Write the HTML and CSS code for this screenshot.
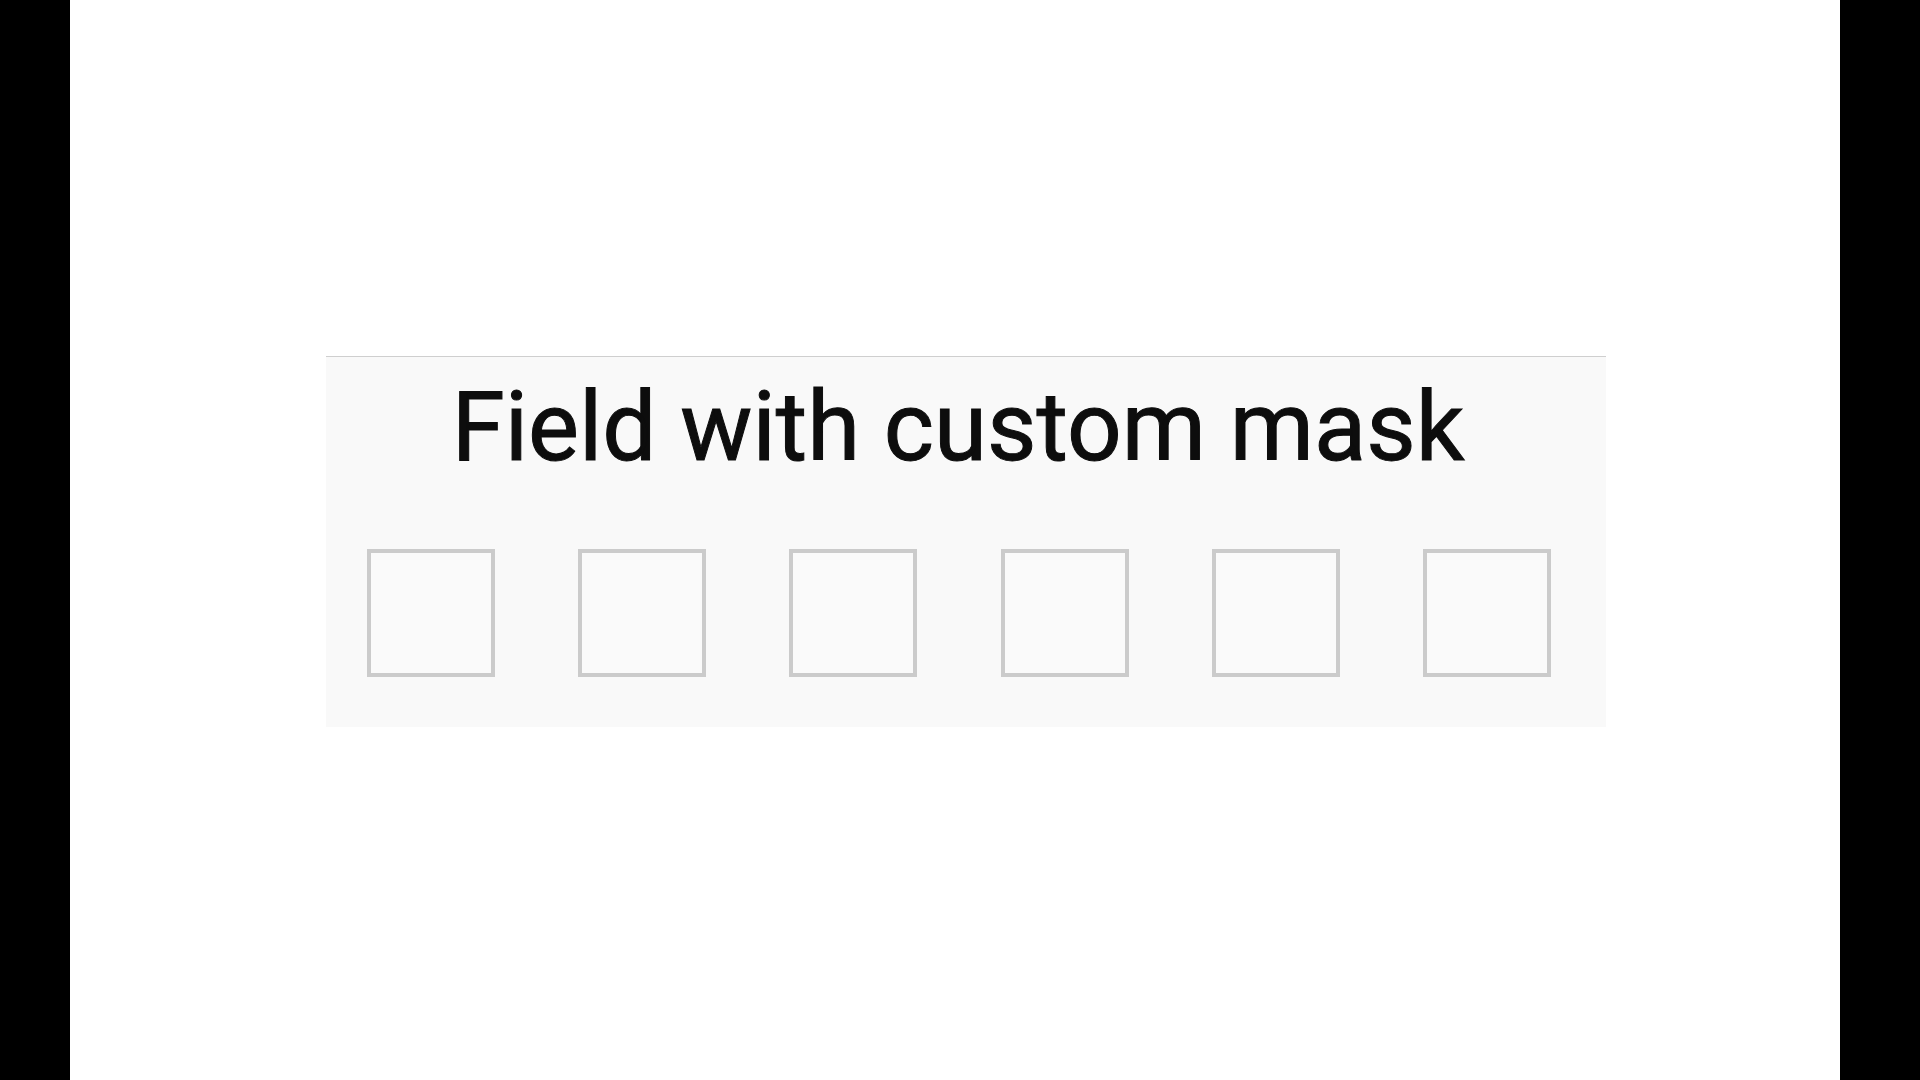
FILE: index.html
```html
<!DOCTYPE html>
<html lang="en">
<head>
    <meta charset="UTF-8">
    <meta name="viewport" content="width=device-width, initial-scale=1.0">
    <title>Field with custom mask</title>
    <link rel="stylesheet" href="styles.css">
</head>
<body>
    <div class="screen">
        <div class="panel">
            <div class="title">Field with custom mask</div>
            <div class="cells">
                <input class="cell" type="text" maxlength="1">
                <input class="cell" type="text" maxlength="1">
                <input class="cell" type="text" maxlength="1">
                <input class="cell" type="text" maxlength="1">
                <input class="cell" type="text" maxlength="1">
                <input class="cell" type="text" maxlength="1">
            </div>
        </div>
    </div>
</body>
</html>
```

FILE: styles.css
```css
html, body {
    margin: 0;
    height: 100%;
}
body {
    background: #000;
    font-family: Roboto, "Liberation Sans", sans-serif;
    display: flex;
    padding-left: 70px;
    box-sizing: border-box;
    overflow: hidden;
}
.screen {
    width: 1770px;
    height: 1080px;
    background: #fff;
    padding-top: 356px;
    box-sizing: border-box;
    box-shadow: 2px 0 3px rgba(0, 0, 0, 0.4);
}
.panel {
    margin-left: 256px;
    width: 1280px;
    height: 371px;
    box-sizing: border-box;
    background: #f9f9f9;
    border-top: 1px solid #cfcfcf;
    padding-top: 12px;
}
.title {
    font-size: 96px;
    line-height: 116px;
    color: #0d0d0d;
    -webkit-text-stroke: 1px #0d0d0d;
    text-align: center;
    padding-right: 16px;
}
.cells {
    display: flex;
    gap: 83.2px;
    padding-left: 41px;
    margin-top: 64px;
}
.cell {
    width: 128px;
    height: 128px;
    box-sizing: border-box;
    border: 4px solid #cbcbcb;
    background: #fafafa;
    margin: 0;
    padding: 0;
    outline: none;
}
```
